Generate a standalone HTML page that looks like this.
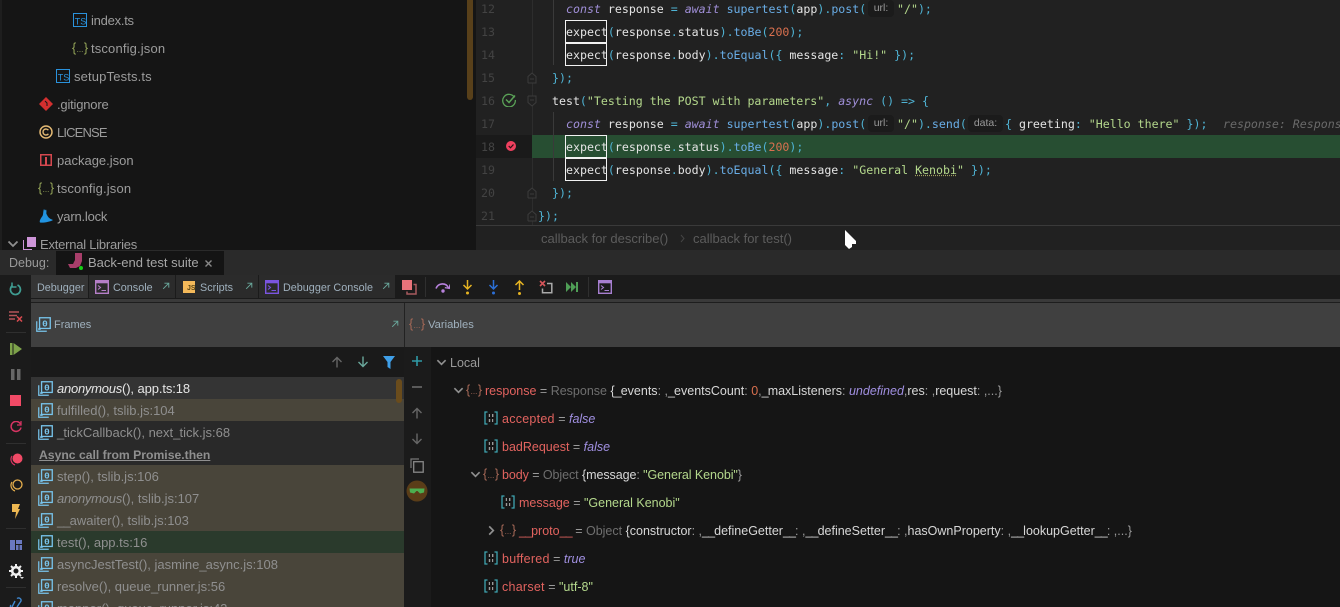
<!DOCTYPE html>
<html><head><meta charset="utf-8">
<style>
html,body{margin:0;padding:0;background:#151515}
#r{position:relative;width:1340px;height:607px;overflow:hidden;background:#151515;font-family:"Liberation Sans",sans-serif;font-size:12.5px;color:#9a9a9a}
#r div,#r svg{position:absolute}
.t{position:absolute;white-space:pre;line-height:22px;height:22px;transform:translateY(1px)}
.c{position:absolute;white-space:pre;font-family:"DejaVu Sans Mono","Liberation Mono",monospace;font-size:11.6px;line-height:23px;height:23px;color:#e4e4e4;transform:translateY(1px)}
.n{color:#434343;left:481px}
.k{color:#a08fd8;font-style:italic}.b{color:#69ade6}.p{color:#4fb3d4}.s{color:#b4d88c}.o{color:#d9704f}.w{color:#e4e4e4}
.box{position:absolute;left:565px;width:40px;height:21px;border:1px solid #f2f2f2}
.inl{position:absolute;background:#1b1b1b;border-radius:4px;height:17px;color:#9a9a9a;font-size:10.5px;line-height:17px;text-align:center}
.tr{font-size:13px;color:#9c9c9c;line-height:22px}
.f{font-size:13px;color:#8f8f8f}
.f i{letter-spacing:-.25px}
.v{font-size:12.5px;color:#9a9a9a;line-height:22px}
.u{letter-spacing:-.9px}
.rd{color:#e2635f}.g{color:#6f6f6f}.wh{color:#d8d8d8}.st{color:#b4d88c}.it{color:#a08fe0;font-style:italic}.or{color:#d9704f}.cy{color:#4fb3d4}
.row{position:absolute;left:31px;width:373px;height:22px}
.tb{position:absolute;top:275px;height:23px;background:#2b2b2b}
.sep{position:absolute;background:#2f2f2f}
</style></head><body>
<div id="r">
<svg width="0" height="0" style="position:absolute">
<symbol id="fr" viewBox="0 0 16 16"><path d="M.8 4.500V15.200H11.500" fill="none" stroke="#78c4ec" stroke-width="1.300"/><path d="M2.800 12V13.200H5" fill="none" stroke="#78c4ec" stroke-width="1"/><rect x="3.800" y=".8" width="11.400" height="11.400" fill="none" stroke="#78c4ec" stroke-width="1.400"/><text x="9.500" y="10" font-size="10" font-weight="bold" text-anchor="middle" fill="#78c4ec" font-family="Liberation Mono">0</text></symbol>
<symbol id="ts" viewBox="0 0 14 14"><rect x=".5" y=".5" width="13" height="13" fill="none" stroke="#2a92dc"/><text x="7.500" y="11.500" font-size="9" text-anchor="middle" fill="#2a92dc" font-family="Liberation Sans">TS</text></symbol>
<symbol id="js" viewBox="0 0 16 14"><text x="0" y="11" font-size="12.500" fill="#97a85a" font-family="Liberation Sans">{</text><text x="8" y="11" font-size="8" text-anchor="middle" fill="#97a85a" font-family="Liberation Sans">...</text><text x="16" y="11" font-size="12.500" text-anchor="end" fill="#97a85a" font-family="Liberation Sans">}</text></symbol>
<symbol id="ob" viewBox="0 0 16 14"><text x="0" y="11" font-size="12.500" fill="#a86a58" font-family="Liberation Sans">{</text><text x="8" y="11" font-size="8" text-anchor="middle" fill="#a86a58" font-family="Liberation Sans">...</text><text x="16" y="11" font-size="12.500" text-anchor="end" fill="#a86a58" font-family="Liberation Sans">}</text></symbol>
<symbol id="pr" viewBox="0 0 14 14"><path d="M3.500 1H1V13H3.500M10.500 1H13V13H10.500" fill="none" stroke="#3fa5b0" stroke-width="1.300"/><path d="M4.800 3h1.200v3H4.800zM8 3h1.400v3H8zM4.800 8h1.400v3H4.800zM8 8h1.200v3H8z" fill="#9a9a9a"/></symbol>
<symbol id="ch" viewBox="0 0 12 12"><path d="M1.500 3.500L6 8l4.500-4.500" fill="none" stroke="#8f8f8f" stroke-width="1.800"/></symbol>
<symbol id="ar" viewBox="0 0 10 10"><path d="M1.500 8.500L8.500 1.500M3 1.500H8.500V7" fill="none" stroke="#6aa89c" stroke-width="1.200"/></symbol>
<symbol id="con" viewBox="0 0 14 14"><rect x=".7" y=".7" width="12.600" height="12.600" fill="none" stroke="currentColor" stroke-width="1.400"/><rect x=".7" y=".7" width="12.600" height="2.600" fill="currentColor"/><path d="M3 5.500L5.500 7.500L3 9.500M6.500 10.500H11" fill="none" stroke="currentColor" stroke-width="1.100"/></symbol>
<symbol id="fd" viewBox="0 0 12 12"><path d="M2 1V7.500L6 11L10 7.500V1H2M4 5H8" fill="#212121" stroke="#3c3c3c"/></symbol>
</svg>

<!-- project tree -->
<div style="left:0;top:0;width:2px;height:250px;background:#1e1e1e"></div>
<svg style="left:73px;top:13px" width="14" height="14"><use href="#ts"/></svg><span class="t tr" style="left:91px;top:9px;letter-spacing:-.25px">index.ts</span>
<svg style="left:72px;top:41px" width="16" height="14"><use href="#js"/></svg><span class="t tr" style="left:91px;top:37px;letter-spacing:.15px">tsconfig.json</span>
<svg style="left:56px;top:69px" width="14" height="14"><use href="#ts"/></svg><span class="t tr" style="left:74px;top:65px;letter-spacing:.15px">setupTests.ts</span>
<svg style="left:39px;top:97px" width="14" height="14" viewBox="0 0 14 14"><path d="M7 0L14 7L7 14L0 7Z" fill="#d32f2f"/><path d="M6 4L8 6V9" stroke="#151515" fill="none"/></svg><span class="t tr" style="left:57px;top:93px;letter-spacing:-.2px">.gitignore</span>
<svg style="left:39px;top:125px" width="14" height="14" viewBox="0 0 14 14"><circle cx="7" cy="7" r="6" fill="none" stroke="#e2b873" stroke-width="1.500"/><path d="M9.400 5.200A3 3 0 1 0 9.400 8.800" fill="none" stroke="#e2b873" stroke-width="1.400"/></svg><span class="t tr" style="left:57px;top:121px;letter-spacing:-.85px">LICENSE</span>
<svg style="left:40px;top:154px" width="12" height="12" viewBox="0 0 12 12"><rect width="12" height="12" fill="#d5484f"/><rect x="1.500" y="1.500" width="9" height="9" fill="#151515"/><rect x="5" y="3" width="2" height="7.500" fill="#d5484f"/></svg><span class="t tr" style="left:57px;top:149px">package.json</span>
<svg style="left:38px;top:181px" width="16" height="14"><use href="#js"/></svg><span class="t tr" style="left:57px;top:177px;letter-spacing:.15px">tsconfig.json</span>
<svg style="left:39px;top:209px" width="14" height="14" viewBox="0 0 14 14"><path d="M5 0L6 1.500L7 .5C8 2 7 4 7.500 5C9 8 10 9.500 14 11C11 13 4 14 1 13.500C0 12 2 9 3.500 7C4.500 5 4 2 5 0Z" fill="#2193e0"/></svg><span class="t tr" style="left:57px;top:205px;letter-spacing:-.2px">yarn.lock</span>
<svg style="left:7px;top:238px" width="12" height="12"><use href="#ch"/></svg>
<svg style="left:23px;top:237px" width="13" height="13" viewBox="0 0 13 13"><rect x="4" y="0" width="9" height="10" fill="#cd94d8"/><path d="M.5 3V12.500H9" stroke="#cd94d8" fill="none"/></svg>
<span class="t tr" style="left:40px;top:233px;letter-spacing:-.23px">External Libraries</span>
<div style="left:467px;top:0;width:6px;height:100px;background:#58401a;border-radius:0 0 3px 3px"></div>

<!-- editor -->
<div style="left:476px;top:0;width:864px;height:250px;background:#212121"></div>
<div style="left:532px;top:0;width:1px;height:225px;background:#2d2d2d"></div>
<div style="left:476px;top:135px;width:56px;height:23px;background:#1a1a1a"></div>
<div style="left:532px;top:135px;width:808px;height:23px;background:#274e32"></div>
<div style="left:553px;top:0;width:1px;height:65px;background:#3a3a3a"></div>
<div style="left:553px;top:112px;width:1px;height:69px;background:#3a3a3a"></div>
<div class="box" style="top:20px"></div><div class="box" style="top:43px"></div><div class="box" style="top:135px"></div><div class="box" style="top:158px"></div>
<svg style="left:526px;top:72px;transform:scaleY(-1)" width="12" height="12"><use href="#fd"/></svg>
<svg style="left:526px;top:95px" width="12" height="12"><use href="#fd"/></svg>
<svg style="left:526px;top:187px;transform:scaleY(-1)" width="12" height="12"><use href="#fd"/></svg>
<svg style="left:526px;top:210px;transform:scaleY(-1)" width="12" height="12"><use href="#fd"/></svg>
<svg style="left:502px;top:93px" width="14" height="14" viewBox="0 0 14 14"><path d="M12.500 4.500A6.300 6.300 0 1 0 13.300 7" fill="none" stroke="#5aa257" stroke-width="1.300"/><path d="M4 6.500L7 9.500L13 2.500" fill="none" stroke="#5aa257" stroke-width="1.500"/></svg>
<svg style="left:506px;top:141px" width="10" height="10" viewBox="0 0 10 10"><circle cx="5" cy="5" r="5" fill="#f0405f"/><path d="M2.700 5L4.500 6.800L7.500 3.500" fill="none" stroke="#2a1015" stroke-width="1.200"/></svg>

<span class="c n" style="top:-3px">12</span><span class="c n" style="top:20px">13</span><span class="c n" style="top:43px">14</span><span class="c n" style="top:66px">15</span><span class="c n" style="top:89px">16</span><span class="c n" style="top:112px">17</span><span class="c n" style="top:135px">18</span><span class="c n" style="top:158px">19</span><span class="c n" style="top:181px">20</span><span class="c n" style="top:204px">21</span>

<span class="c" style="left:566px;top:-3px"><span class="k">const</span> response <span class="p">=</span> <span class="k">await</span> <span class="b">supertest</span><span class="p">(</span>app<span class="p">).</span><span class="b">post</span><span class="p">(</span></span>
<div class="inl" style="left:868px;top:0;width:26px">url:</div>
<span class="c s" style="left:897px;top:-3px">"/"<span class="p">);</span></span>
<span class="c" style="left:566px;top:20px">expect<span class="p">(</span>response<span class="p">.</span>status<span class="p">).</span><span class="b">toBe</span><span class="p">(</span><span class="o">200</span><span class="p">);</span></span>
<span class="c" style="left:566px;top:43px">expect<span class="p">(</span>response<span class="p">.</span>body<span class="p">).</span><span class="b">toEqual</span><span class="p">({</span> message<span class="p">:</span> <span class="s">"Hi!"</span> <span class="p">});</span></span>
<span class="c p" style="left:552px;top:66px">});</span>
<span class="c" style="left:552px;top:89px">test<span class="p">(</span><span class="s">"Testing the POST with parameters"</span><span class="p">,</span> <span class="k">async</span> <span class="p">() =&gt; {</span></span>
<span class="c" style="left:566px;top:112px"><span class="k">const</span> response <span class="p">=</span> <span class="k">await</span> <span class="b">supertest</span><span class="p">(</span>app<span class="p">).</span><span class="b">post</span><span class="p">(</span></span>
<div class="inl" style="left:868px;top:115px;width:26px">url:</div>
<span class="c s" style="left:897px;top:112px">"/"<span class="p">).</span><span class="b">send</span><span class="p">(</span></span>
<div class="inl" style="left:968px;top:115px;width:35px">data:</div>
<span class="c" style="left:1005px;top:112px"><span class="p">{</span> greeting<span class="p">:</span> <span class="s">"Hello there"</span> <span class="p">});</span></span>
<span class="c" style="left:1223px;top:112px;color:#6a6a6a;font-style:italic">response: Response</span>
<span class="c" style="left:566px;top:135px">expect<span class="p">(</span>response<span class="p">.</span>status<span class="p">).</span><span class="b">toBe</span><span class="p">(</span><span class="o">200</span><span class="p">);</span></span>
<span class="c" style="left:566px;top:158px">expect<span class="p">(</span>response<span class="p">.</span>body<span class="p">).</span><span class="b">toEqual</span><span class="p">({</span> message<span class="p">:</span> <span class="s">"General <span style="text-decoration:underline dotted #a0a060">Kenobi</span>"</span> <span class="p">});</span></span>
<span class="c p" style="left:552px;top:181px">});</span>
<span class="c p" style="left:538px;top:204px">});</span>

<div style="left:476px;top:225px;width:864px;height:1px;background:#3a3a3a"></div>
<span class="t" style="left:541px;top:227px;color:#5c5c5c;font-size:13px">callback for describe()</span>
<svg style="left:680px;top:234px" width="5" height="9" viewBox="0 0 5 9"><path d="M1 1L4 4.500L1 8" fill="none" stroke="#444"/></svg>
<span class="t" style="left:693px;top:227px;color:#5c5c5c;font-size:13px">callback for test()</span>
<svg style="left:845px;top:230px" width="12" height="20" viewBox="0 0 12 20"><path d="M0 0L11 11V14L7 14L7 17L4 19L0 15Z" fill="#fff"/></svg>

<!-- debug bar -->
<div style="left:0;top:250px;width:1340px;height:25px;background:#2a2a2a"></div>
<span class="t" style="left:9px;top:251px;color:#9a9a9a;font-size:12.5px">Debug:</span>
<div style="left:56px;top:251px;width:168px;height:24px;background:#141414"></div>
<svg style="left:68px;top:253px" width="16" height="18" viewBox="0 0 16 18"><path d="M7 0H14V8L12 13L8 15H2L0 11H5L7 7Z" fill="#a83e6a"/><circle cx="13" cy="15" r="2" fill="#16d016"/></svg>
<span class="t" style="left:88px;top:251px;color:#a6a6a6;font-size:13px">Back-end test suite</span>
<svg style="left:204px;top:259px" width="9" height="9" viewBox="0 0 9 9"><path d="M1.500 1.500L7.500 7.500M7.500 1.500L1.500 7.500" stroke="#888" stroke-width="1.400"/></svg>

<!-- left strip + tool row -->
<div style="left:0;top:275px;width:31px;height:332px;background:#1b1b1b"></div>
<div style="left:31px;top:275px;width:1309px;height:24px;background:#1b1b1b"></div>
<div style="left:31px;top:299px;width:1309px;height:3px;background:#3a3a3a"></div>
<div style="left:31px;top:302px;width:1309px;height:1px;background:#1e1e1e"></div>
<div class="tb" style="left:31px;width:57px;background:#353535"></div>
<div class="tb" style="left:89px;width:86px"></div>
<div class="tb" style="left:176px;width:82px"></div>
<div class="tb" style="left:259px;width:136px"></div>
<span class="t" style="left:37px;top:276px;font-size:10.8px;color:#9fb0bd">Debugger</span>
<svg style="left:95px;top:280px;color:#b57fc8" width="14" height="14"><use href="#con"/></svg>
<span class="t" style="left:113px;top:276px;font-size:10.8px;color:#9fb0bd">Console</span>
<svg style="left:162px;top:282px" width="8" height="8"><use href="#ar"/></svg>
<div style="left:183px;top:281px;width:12px;height:12px;background:#f4b95a"></div>
<span class="t" style="left:187px;top:282px;font-size:7px;line-height:11px;height:11px;color:#5a4515;font-weight:bold">JS</span>
<span class="t" style="left:200px;top:276px;font-size:10.8px;color:#9fb0bd">Scripts</span>
<svg style="left:245px;top:282px" width="8" height="8"><use href="#ar"/></svg>
<svg style="left:265px;top:280px;color:#7a55e0" width="14" height="14"><use href="#con"/></svg>
<span class="t" style="left:283px;top:276px;font-size:10.8px;color:#9fb0bd">Debugger Console</span>
<svg style="left:382px;top:282px" width="8" height="8"><use href="#ar"/></svg>
<svg style="left:402px;top:280px" width="15" height="15" viewBox="0 0 15 15"><rect width="10" height="10" fill="#e8737a"/><path d="M11.500 4.500H14V14H5V11.500" fill="none" stroke="#a85a5e" stroke-width="1.500"/></svg>
<div class="sep" style="left:425px;top:277px;width:1px;height:20px"></div>
<svg style="left:435px;top:282px" width="15" height="11" viewBox="0 0 15 11"><path d="M1 6.500C3 1 11 0 13.500 6" fill="none" stroke="#b882dd" stroke-width="1.600"/><path d="M10 6H14.500V2" fill="none" stroke="#b882dd" stroke-width="1.300" transform="rotate(10 12 5)"/><circle cx="8" cy="9" r="1.700" fill="#b882dd"/></svg>
<svg style="left:462px;top:280px" width="11" height="15" viewBox="0 0 11 15"><path d="M5.500 0V8M1.500 5L5.500 9L9.500 5" fill="none" stroke="#e6b422" stroke-width="1.500"/><circle cx="5.500" cy="13" r="1.500" fill="#e6b422"/></svg>
<svg style="left:488px;top:280px" width="11" height="15" viewBox="0 0 11 15"><path d="M5.500 0V8M1.500 5L5.500 9L9.500 5" fill="none" stroke="#2b6fd6" stroke-width="1.500"/><circle cx="5.500" cy="13" r="1.500" fill="#2b6fd6"/></svg>
<svg style="left:514px;top:280px" width="11" height="15" viewBox="0 0 11 15"><path d="M5.500 10V1.500M1.500 5L5.500 1L9.500 5" fill="none" stroke="#e6b422" stroke-width="1.500"/><circle cx="5.500" cy="13.500" r="1.500" fill="#e6b422"/></svg>
<svg style="left:539px;top:280px" width="14" height="14" viewBox="0 0 14 14"><path d="M1 1L6 6M6 1L1 6" stroke="#d5555a" stroke-width="1.600"/><path d="M8 3.500H12.800V12.800H3.500V8.500" fill="none" stroke="#aaa" stroke-width="1.500"/></svg>
<svg style="left:566px;top:282px" width="12" height="10" viewBox="0 0 12 10"><path d="M0 0L5 5L0 10ZM5 0L10 5L5 10Z" fill="#4f9e56"/><rect x="10" y="0" width="2" height="10" fill="#4f9e56"/></svg>
<div class="sep" style="left:588px;top:277px;width:1px;height:20px"></div>
<svg style="left:598px;top:280px;color:#a77fd0" width="14" height="14"><use href="#con"/></svg>

<!-- headers -->
<div style="left:31px;top:303px;width:1309px;height:44px;background:#404040"></div>
<div style="left:404px;top:303px;width:1px;height:44px;background:#222"></div>
<svg style="left:36px;top:317px" width="15" height="15"><use href="#fr"/></svg>
<span class="t" style="left:54px;top:313px;font-size:11px;color:#9fb0bd">Frames</span>
<svg style="left:391px;top:320px" width="8" height="8"><use href="#ar"/></svg>
<svg style="left:409px;top:317px" width="16" height="14"><use href="#ob"/></svg>
<span class="t" style="left:428px;top:313px;font-size:11.2px;color:#9fb0bd">Variables</span>

<!-- frames toolbar -->
<div style="left:31px;top:347px;width:373px;height:30px;background:#1a1a1a"></div>
<div style="left:404px;top:347px;width:27px;height:260px;background:#1b1b1b"></div>
<svg style="left:331px;top:356px" width="12" height="12" viewBox="0 0 12 12"><path d="M6 11.500V1.500M1.500 6L6 1.500L10.500 6" fill="none" stroke="#666" stroke-width="1.400"/></svg>
<svg style="left:357px;top:356px" width="12" height="12" viewBox="0 0 12 12"><path d="M6 .5V10.500M1.500 6L6 10.500L10.500 6" fill="none" stroke="#6aa89c" stroke-width="1.400"/></svg>
<svg style="left:383px;top:356px" width="12" height="13" viewBox="0 0 12 13"><path d="M0 0H12L7.500 6V13L4.500 11V6Z" fill="#3f9fe8"/></svg>

<!-- frame rows -->
<div style="left:31px;top:377px;width:373px;height:230px;background:#292929"></div>
<div class="row" style="top:377px;background:#343434"></div>
<div class="row" style="top:399px;background:#49453a"></div>
<div class="row" style="top:465px;height:66px;background:#49453a"></div>
<div class="row" style="top:531px;background:#2a3a2c"></div>
<div class="row" style="top:553px;height:54px;background:#49453a"></div>
<div style="left:396px;top:379px;width:6px;height:24px;background:#6a4c1c;border-radius:3px"></div>

<svg style="left:38px;top:381px" width="15" height="15"><use href="#fr"/></svg>
<svg style="left:38px;top:403px" width="15" height="15"><use href="#fr"/></svg>
<svg style="left:38px;top:425px" width="15" height="15"><use href="#fr"/></svg>
<svg style="left:38px;top:469px" width="15" height="15"><use href="#fr"/></svg>
<svg style="left:38px;top:491px" width="15" height="15"><use href="#fr"/></svg>
<svg style="left:38px;top:513px" width="15" height="15"><use href="#fr"/></svg>
<svg style="left:38px;top:535px" width="15" height="15"><use href="#fr"/></svg>
<svg style="left:38px;top:557px" width="15" height="15"><use href="#fr"/></svg>
<svg style="left:38px;top:579px" width="15" height="15"><use href="#fr"/></svg>
<svg style="left:38px;top:601px" width="15" height="15"><use href="#fr"/></svg>

<span class="t f" style="left:57px;top:377px;color:#e6e6e6;letter-spacing:-.1px"><i>anonymous</i>(), app.ts:18</span>
<span class="t f" style="left:57px;top:399px">fulfilled(), tslib.js:104</span>
<span class="t f" style="left:57px;top:421px"><span class="u">_</span>tickCallback(), next<span class="u">_</span>tick.js:68</span>
<span class="t f" style="left:39px;top:443px;font-weight:bold;font-size:12.2px;text-decoration:underline">Async call from Promise.then</span>
<span class="t f" style="left:57px;top:465px">step(), tslib.js:106</span>
<span class="t f" style="left:57px;top:487px"><i>anonymous</i>(), tslib.js:107</span>
<span class="t f" style="left:57px;top:509px"><span class="u">__</span>awaiter(), tslib.js:103</span>
<span class="t f" style="left:57px;top:531px">test(), app.ts:16</span>
<span class="t f" style="left:57px;top:553px">asyncJestTest(), jasmine<span class="u">_</span>async.js:108</span>
<span class="t f" style="left:57px;top:575px">resolve(), queue<span class="u">_</span>runner.js:56</span>
<span class="t f" style="left:57px;top:597px">mapper(), queue<span class="u">_</span>runner.js:42</span>

<!-- middle toolbar -->
<svg style="left:411px;top:355px" width="12" height="12" viewBox="0 0 12 12"><path d="M6 1V11M1 6H11" stroke="#2f9aa6" stroke-width="1.600"/></svg>
<div style="left:412px;top:386px;width:10px;height:1.500px;background:#5a5a5a"></div>
<svg style="left:411px;top:407px" width="12" height="12" viewBox="0 0 12 12"><path d="M6 11.500V1.500M1.500 6L6 1.500L10.500 6" fill="none" stroke="#666" stroke-width="1.400"/></svg>
<svg style="left:411px;top:433px" width="12" height="12" viewBox="0 0 12 12"><path d="M6 .5V10.500M1.500 6L6 10.500L10.500 6" fill="none" stroke="#666" stroke-width="1.400"/></svg>
<svg style="left:410px;top:458px" width="14" height="15" viewBox="0 0 14 15"><path d="M1 10V1H9" fill="none" stroke="#777" stroke-width="1.200"/><rect x="3.700" y="3.700" width="9.500" height="10.500" fill="none" stroke="#888" stroke-width="1.300"/></svg>
<svg style="left:406px;top:480px" width="22" height="22" viewBox="0 0 22 22"><circle cx="11" cy="11" r="10.500" fill="#5a3d18"/><path d="M3.500 8.500H18.500L18 12.500L14 13.500L11.500 11H10.500L8 13.500L4 12.500Z" fill="#4caf50"/></svg>

<!-- left strip icons -->
<svg style="left:9px;top:282px" width="13" height="14" viewBox="0 0 13 14"><path d="M8.500 3A5 5 0 1 1 3.500 3.500" fill="none" stroke="#3f9d92" stroke-width="1.700"/><path d="M3 0.500V5H7.500" fill="none" stroke="#3f9d92" stroke-width="1.500"/></svg>
<svg style="left:9px;top:311px" width="14" height="11" viewBox="0 0 14 11"><path d="M0 1H10M0 4.500H8M0 8H6" stroke="#b4555a" stroke-width="1.400"/><path d="M8 5.500L13 10.500M13 5.500L8 10.500" stroke="#d84a50" stroke-width="1.500"/></svg>
<div class="sep" style="left:6px;top:332px;width:20px;height:1px"></div>
<svg style="left:10px;top:343px" width="12" height="12" viewBox="0 0 12 12"><rect width="2.500" height="12" fill="#7da24a"/><path d="M3.500 0L12 6L3.500 12Z" fill="#7da24a"/></svg>
<svg style="left:11px;top:369px" width="10" height="11" viewBox="0 0 10 11"><rect width="3.500" height="11" fill="#666"/><rect x="6" width="3.500" height="11" fill="#666"/></svg>
<div style="left:10px;top:395px;width:11px;height:11px;background:#f14a66"></div>
<svg style="left:10px;top:421px" width="12" height="12" viewBox="0 0 12 12"><path d="M10.500 3A5 5 0 1 0 11 6.500" fill="none" stroke="#d63462" stroke-width="1.500"/><path d="M11 0V4H7" fill="none" stroke="#d63462" stroke-width="1.300"/></svg>
<div class="sep" style="left:6px;top:443px;width:20px;height:1px"></div>
<svg style="left:9px;top:453px" width="14" height="13" viewBox="0 0 14 13"><circle cx="8.500" cy="5.500" r="5" fill="#f14a66"/><path d="M3 3A6 6 0 0 0 6 12" fill="none" stroke="#d63462" stroke-width="1.200"/></svg>
<svg style="left:9px;top:479px" width="14" height="13" viewBox="0 0 14 13"><circle cx="8.500" cy="5.500" r="4.500" fill="none" stroke="#e8b04d" stroke-width="1.300"/><path d="M3 3A6 6 0 0 0 6 12" fill="none" stroke="#e8b04d" stroke-width="1.200"/></svg>
<svg style="left:12px;top:504px" width="8" height="15" viewBox="0 0 8 15"><path d="M0 0H8L6 5H8L3 15L4 8H0Z" fill="#eeb852"/></svg>
<div class="sep" style="left:6px;top:528px;width:20px;height:1px"></div>
<svg style="left:10px;top:540px" width="12" height="10" viewBox="0 0 12 10"><rect width="5" height="10" fill="#6a78c0"/><rect x="6" width="6" height="4" fill="#6a78c0"/><rect x="6" y="5" width="2.500" height="5" fill="#6a78c0"/><rect x="9.500" y="5" width="2.500" height="5" fill="#6a78c0"/></svg>
<svg style="left:9px;top:564px" width="15" height="15" viewBox="0 0 15 15"><circle cx="7" cy="7" r="3.800" fill="none" stroke="#f0f0f0" stroke-width="2.600"/><path d="M7 0V2.500M7 11.500V14M0 7H2.500M11.500 7H14M2 2L3.800 3.800M10.200 10.200L12 12M12 2L10.200 3.800M3.800 10.200L2 12" stroke="#f0f0f0" stroke-width="2"/><path d="M11 13H15L13 15Z" fill="#ddd"/></svg>
<div class="sep" style="left:6px;top:587px;width:20px;height:1px"></div>
<svg style="left:9px;top:597px" width="14" height="10" viewBox="0 0 14 10"><path d="M2 12L6 4M8 1.500A2.500 2.500 0 0 1 12 4L8 10M2 8A2 2 0 0 0 5 11" fill="none" stroke="#3f88d0" stroke-width="1.400"/></svg>

<!-- variables -->
<svg style="left:436px;top:357px" width="11" height="11"><use href="#ch"/></svg>
<span class="t v" style="left:450px;top:351px">Local</span>
<svg style="left:453px;top:385px" width="11" height="11"><use href="#ch"/></svg>
<svg style="left:466px;top:383px" width="16" height="14"><use href="#ob"/></svg>
<span class="t v" style="left:485px;top:379px"><span class="rd">response</span> = <span class="g">Response</span> <span class="wh">{</span><span class="wh"><span class="u">_</span>events</span>: ,<span class="wh"><span class="u">_</span>eventsCount</span>: <span class="or">0</span>,<span class="wh"><span class="u">_</span>maxListeners</span>: <span class="it">undefined</span>,<span class="wh">res</span>: ,<span class="wh">request</span>: ,...}</span>
<svg style="left:484px;top:411px" width="14" height="14"><use href="#pr"/></svg>
<span class="t v" style="left:502px;top:407px"><span class="rd" style="letter-spacing:.25px">accepted</span> = <span class="it">false</span></span>
<svg style="left:484px;top:439px" width="14" height="14"><use href="#pr"/></svg>
<span class="t v" style="left:502px;top:435px"><span class="rd">badRequest</span> = <span class="it">false</span></span>
<svg style="left:470px;top:469px" width="11" height="11"><use href="#ch"/></svg>
<svg style="left:483px;top:467px" width="16" height="14"><use href="#ob"/></svg>
<span class="t v" style="left:502px;top:463px;letter-spacing:-.07px"><span class="rd">body</span> = <span class="g">Object</span> <span class="wh">{message</span>: <span class="st">"General Kenobi"</span>}</span>
<svg style="left:501px;top:495px" width="14" height="14"><use href="#pr"/></svg>
<span class="t v" style="left:519px;top:491px"><span class="rd">message</span> = <span class="st">"General Kenobi"</span></span>
<svg style="left:486px;top:525px;transform:rotate(-90deg)" width="11" height="11"><use href="#ch"/></svg>
<svg style="left:500px;top:523px" width="16" height="14"><use href="#ob"/></svg>
<span class="t v" style="left:519px;top:519px"><span class="rd"><span class="u">__</span>proto<span class="u">__</span></span> = <span class="g">Object</span> <span class="wh">{constructor</span>: ,<span class="wh"><span class="u">__</span>defineGetter<span class="u">__</span></span>: ,<span class="wh"><span class="u">__</span>defineSetter<span class="u">__</span></span>: ,<span class="wh">hasOwnProperty</span>: ,<span class="wh"><span class="u">__</span>lookupGetter<span class="u">__</span></span>: ,...}</span>
<svg style="left:484px;top:551px" width="14" height="14"><use href="#pr"/></svg>
<span class="t v" style="left:502px;top:547px"><span class="rd" style="letter-spacing:.25px">buffered</span> = <span class="it">true</span></span>
<svg style="left:484px;top:579px" width="14" height="14"><use href="#pr"/></svg>
<span class="t v" style="left:502px;top:575px"><span class="rd" style="letter-spacing:.25px">charset</span> = <span class="st">"utf-8"</span></span>
</div>
</body></html>
